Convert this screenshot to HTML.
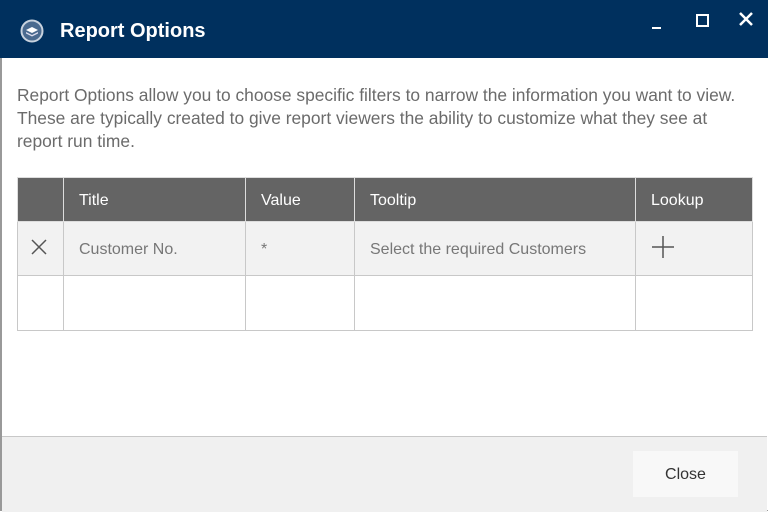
<!DOCTYPE html>
<html><head><style>
body{margin:0;width:768px;height:512px;overflow:hidden;font-family:"Liberation Sans",sans-serif;background:#fff;position:relative}
.tb{position:absolute;left:0;top:0;width:768px;height:58px;background:#00305e;color:#fff}
.tb .t{position:absolute;left:60px;top:20px;font-size:20px;font-weight:bold}
.frame{position:absolute;left:0;top:58px;width:766px;height:452px;border:1px solid #999;border-top:none;border-left:2px solid #999}
.desc{position:absolute;left:17px;top:84px;width:732px;font-size:17.4px;line-height:23px;color:#6b6b6b}
table{position:absolute;left:17px;top:177px;border-collapse:collapse;font-size:16px}
td,th{border:1px solid #c8c8c8;padding:2px 0 0 15px;text-align:left}
th{background:#646464;color:#fff;font-weight:normal;height:41px;border-color:#ddd}
.r1 td{background:#f2f2f2;height:51px;color:#777}
.r2 td{height:52px}
.foot{position:absolute;left:2px;top:436px;width:765px;height:75px;background:#f0f0f0;border-top:1px solid #c8c8c8}
.btn{position:absolute;left:633px;top:451px;width:105px;height:46px;background:#f8f8f8;font-size:16px;color:#333;text-align:center;line-height:48px}
</style></head><body>
<div class="tb">
<svg style="position:absolute;left:20px;top:19px" width="24" height="24"><circle cx="12" cy="12" r="10.5" fill="#4a6a8f" stroke="#c8d2de" stroke-width="2"/><path d="M6 11 L12 8 L18 11 L12 14Z" fill="#fff"/><path d="M6 13 L12 16 L18 13 L18 14.5 L12 17.5 L6 14.5Z" fill="#dde"/></svg>
<div class="t">Report Options</div>
<div style="position:absolute;left:652px;top:27px;width:9px;height:2px;background:#fff"></div>
<div style="position:absolute;left:696px;top:14px;width:9px;height:9px;border:2px solid #fff"></div>
<svg style="position:absolute;left:739px;top:12px" width="14" height="14"><path d="M1 1L13 13M13 1L1 13" stroke="#fff" stroke-width="2.5"/></svg>
</div>
<div class="frame"></div>
<div class="desc">Report Options allow you to choose specific filters to narrow the information you want to view.<br>These are typically created to give report viewers the ability to customize what they see at<br>report run time.</div>
<table>
<tr><th style="width:30px"></th><th style="width:166px">Title</th><th style="width:93px">Value</th><th style="width:265px">Tooltip</th><th style="width:101px">Lookup</th></tr>
<tr class="r1"><td style="padding-left:12px"><svg width="18" height="18"><path d="M2 2L16 16M16 2L2 16" stroke="#555" stroke-width="1.5"/></svg></td><td>Customer No.</td><td>*</td><td>Select the required Customers</td><td><svg width="24" height="24"><path d="M12 1V23M1 12H23" stroke="#555" stroke-width="1.5"/></svg></td></tr>
<tr class="r2"><td></td><td></td><td></td><td></td><td></td></tr>
</table>
<div class="foot"></div>
<div class="btn">Close</div>
</body></html>
